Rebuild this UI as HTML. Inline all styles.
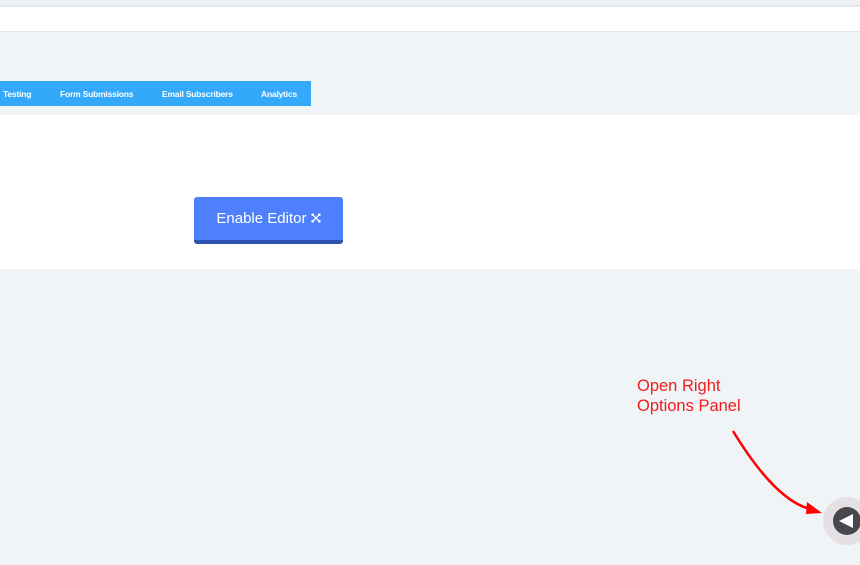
<!DOCTYPE html>
<html><head><style>
body{margin:0;width:860px;height:565px;background:#f1f4f7;position:relative;overflow:hidden;font-family:"Liberation Sans",sans-serif}
.top{position:absolute;left:0;top:0;width:860px;height:5px;background:#eef1f5;border-bottom:2px solid #e6e8ee}
.bar{position:absolute;left:0;top:7px;width:860px;height:24px;background:#fff;border-bottom:1px solid #e3e6ea}
.nav{position:absolute;left:0;top:81px;width:311px;height:25px;background:#34a9f9;color:#fff;font-size:8.5px;font-weight:bold;letter-spacing:-0.2px}
.nav span{position:absolute;top:8px}
.panel{position:absolute;left:0;top:115px;width:860px;height:154px;background:#fff}
.btn{position:absolute;left:194px;top:197px;width:149px;height:43px;background:#4e80fd;border-bottom:4px solid #2d53b3;border-radius:3px;color:#fff;font-size:15px;text-align:center;line-height:43px}
.lbl{position:absolute;left:637px;top:376px;color:#f01d1d;font-size:16.5px;line-height:20px}
</style></head><body>
<div class="top"></div><div class="bar"></div>
<div class="nav"><span style="left:3px">Testing</span><span style="left:60px">Form Submissions</span><span style="left:162px">Email Subscribers</span><span style="left:261px">Analytics</span></div>
<div class="panel"></div>
<div class="btn">Enable Editor <svg width="10" height="10" viewBox="0 0 12 12" style="vertical-align:0px"><path d="M2 2L10 10M10 2L2 10" stroke="#fff" stroke-width="1.6"/><circle cx="2" cy="2" r="1.6" fill="#fff"/><circle cx="10" cy="2" r="1.6" fill="#fff"/><circle cx="2" cy="10" r="1.6" fill="#fff"/><circle cx="10" cy="10" r="1.6" fill="#fff"/></svg></div>
<div class="lbl">Open Right<br>Options Panel</div>
<svg style="position:absolute;left:0;top:0" width="860" height="565">
<path d="M733 431 Q775 500 810 509" stroke="#f00" stroke-width="2.5" fill="none"/>
<path d="M822 513 L807 502 L806 514 Z" fill="#f00"/>
<circle cx="847" cy="521" r="24" fill="#e4e0e3"/>
<circle cx="847" cy="521" r="14" fill="#48474b"/>
<path d="M839 521 L853 514 L853 528 Z" fill="#fff"/>
</svg>
</body></html>
